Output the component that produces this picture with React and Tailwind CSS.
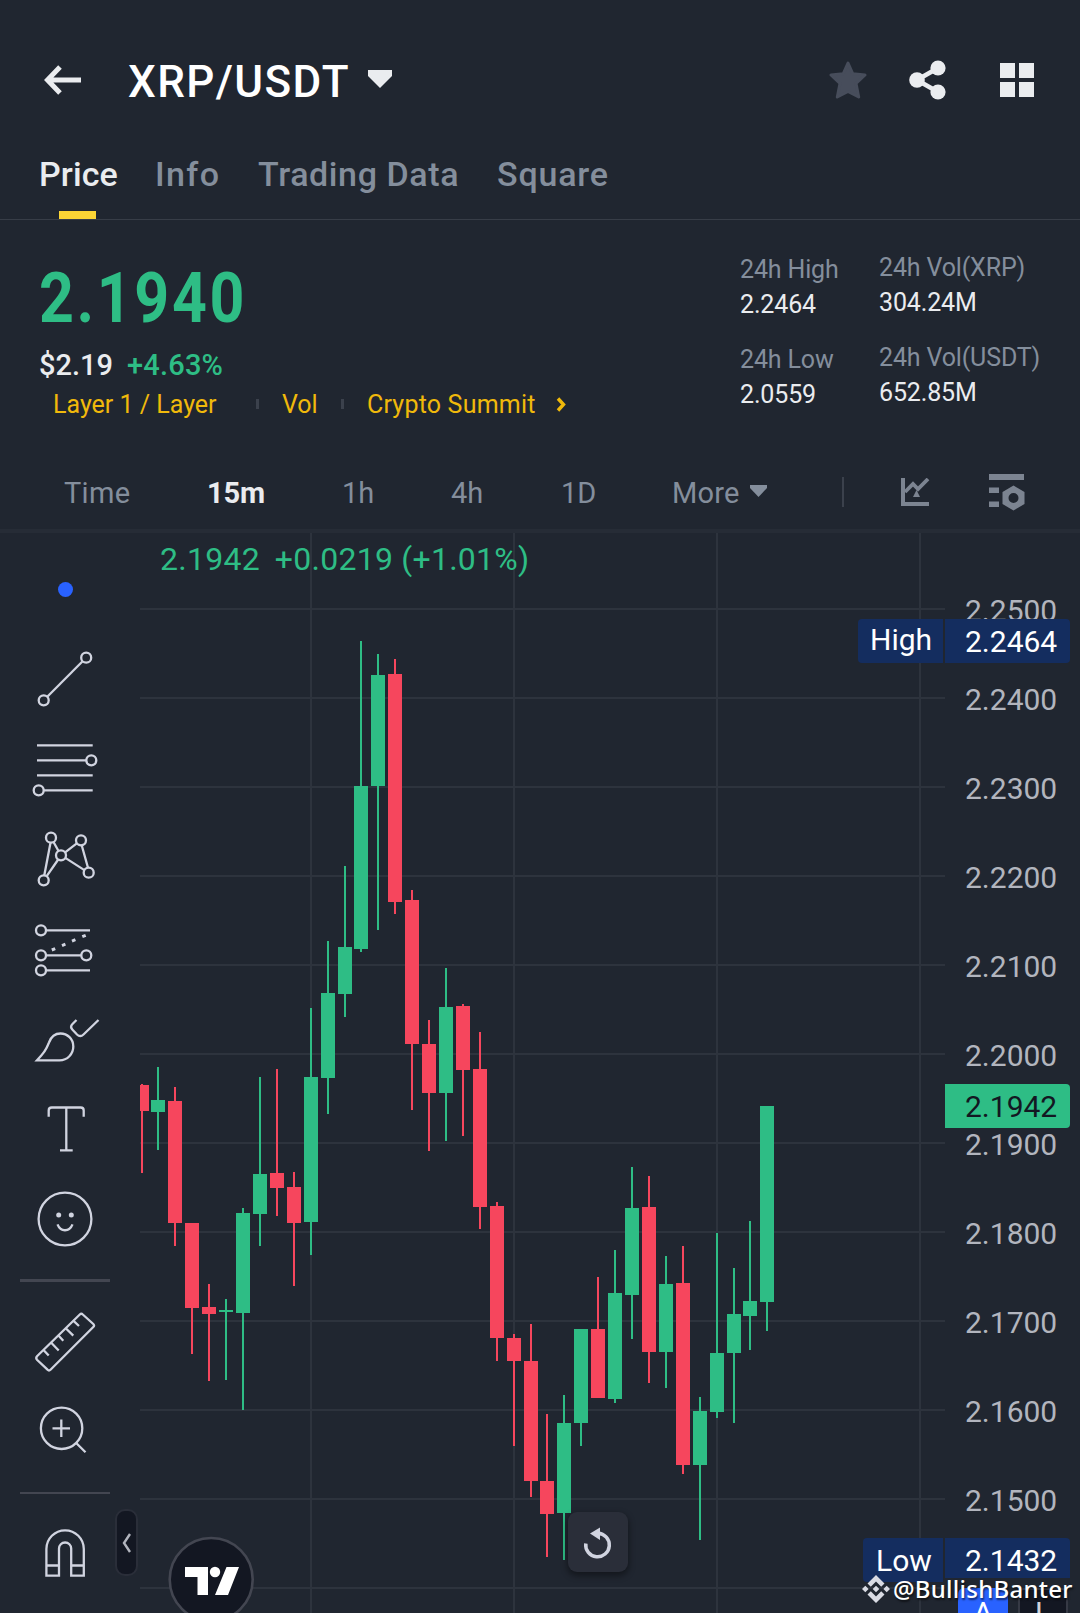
import React from "react";

const TABS = [
  { label: 'Price', style: 'w-[79px] tracking-[0.1px] text-[#eaecef]' },
  { label: 'Info', style: 'w-[66px] tracking-[1.4px]' },
  { label: 'Trading Data', style: 'w-[202px] tracking-[0.6px]' },
  { label: 'Square', style: 'w-[113px] tracking-[0.8px]' },
];

const PRICE_LABELS = [
  '2.2500', '2.2400', '2.2300', '2.2200', '2.2100', '2.2000',
  '2.1900', '2.1800', '2.1700', '2.1600', '2.1500',
];

const GRID_ROWS = [608, 697, 786, 875, 964, 1053, 1142, 1231, 1320, 1409, 1498, 1587];
const GRID_COLUMNS = [310, 513, 716, 919];

// [center x, high, body top, body bottom, low, is up]
const CANDLES = [
  [142, 1084, 1085, 1111, 1173, 0],
  [158, 1067, 1100, 1112, 1150, 1],
  [175, 1087, 1101, 1223, 1246, 0],
  [192, 1223, 1223, 1308, 1354, 0],
  [209, 1284, 1307, 1314, 1381, 0],
  [226, 1299, 1310, 1312, 1380, 1],
  [243, 1208, 1213, 1313, 1410, 1],
  [260, 1077, 1174, 1214, 1246, 1],
  [277, 1069, 1173, 1188, 1216, 0],
  [294, 1172, 1187, 1223, 1286, 0],
  [311, 1008, 1077, 1222, 1255, 1],
  [328, 941, 993, 1078, 1114, 1],
  [345, 866, 947, 994, 1017, 1],
  [361, 641, 786, 949, 952, 1],
  [378, 654, 675, 786, 930, 1],
  [395, 659, 674, 902, 914, 0],
  [412, 890, 900, 1044, 1110, 0],
  [429, 1020, 1044, 1093, 1151, 0],
  [446, 968, 1007, 1093, 1141, 1],
  [463, 1004, 1006, 1070, 1136, 0],
  [480, 1032, 1069, 1207, 1229, 0],
  [497, 1202, 1206, 1338, 1361, 0],
  [514, 1334, 1338, 1361, 1446, 0],
  [531, 1324, 1361, 1481, 1497, 0],
  [547, 1414, 1481, 1514, 1557, 0],
  [564, 1395, 1423, 1513, 1560, 1],
  [581, 1329, 1329, 1423, 1446, 1],
  [598, 1277, 1329, 1398, 1398, 0],
  [615, 1250, 1293, 1399, 1403, 1],
  [632, 1167, 1208, 1295, 1339, 1],
  [649, 1176, 1207, 1352, 1383, 0],
  [666, 1256, 1284, 1352, 1388, 1],
  [683, 1246, 1283, 1465, 1474, 0],
  [700, 1397, 1411, 1465, 1540, 1],
  [717, 1233, 1353, 1412, 1418, 1],
  [734, 1268, 1314, 1353, 1423, 1],
  [750, 1221, 1301, 1316, 1350, 1],
  [767, 1106, 1106, 1302, 1331, 1],
];

const ToolIcon = ({ children }) => (
  <svg
    className="h-[90px] w-[140px] shrink-0"
    viewBox="0 0 140 90"
    fill="none"
    stroke="#d1d4e0"
    strokeWidth="2.3"
  >
    {children}
  </svg>
);

const Header = () => (
  <header className="flex h-[159px] items-center pl-[44px] pr-[46px]">
    <svg className="h-[30px] w-[37px]" viewBox="0 0 37 30" fill="none" stroke="#eaecef" strokeWidth="5">
      <path d="M4 15H37M16 2L3.5 15L16 28" />
    </svg>
    <h1 className="ml-[47px] w-[228px] whitespace-nowrap pt-[4px] text-[44px] font-medium leading-none tracking-[1.4px] text-white">XRP/USDT</h1>
    <svg className="-mt-[2px] ml-[12px] h-[18px] w-[24px]" viewBox="0 0 24 18" fill="#eaecef">
      <path d="M0 0H24V6L12 18L0 6Z" />
    </svg>
    <div className="ml-auto flex items-center">
      <svg className="h-[40px] w-[38px]" viewBox="0 0 38 40" fill="#474d5b" stroke="#474d5b" strokeWidth="3" strokeLinejoin="round">
        <path d="M19 3L23.8 13.8L36 15L27 23.4L29.7 37L19 31.5L8.3 37L11 23.4L2 15L14.2 13.8Z" />
      </svg>
      <svg className="ml-[42px] h-[40px] w-[37px]" viewBox="0 0 37 40" fill="#eaecef">
        <path d="M8 20L29 8M8 20L29 32" stroke="#eaecef" strokeWidth="4.6" />
        <circle cx="8" cy="20" r="7.8" />
        <circle cx="29" cy="8" r="7.6" />
        <circle cx="29" cy="32" r="7.6" />
      </svg>
      <svg className="ml-[54px] h-[34px] w-[34px]" viewBox="0 0 34 34" fill="#eaecef">
        <path d="M0 0H15V15H0ZM19 0H34V15H19ZM0 19H15V34H0ZM19 19H34V34H19Z" />
      </svg>
    </div>
  </header>
);

const Tabs = () => (
  <nav className="flex h-[61px] gap-[37px] border-b border-[#373d47] pl-[39px] text-[34px] font-medium leading-[30px] text-[#848e9c]">
    {
      TABS.map((tab, index) => (
        <div key={tab.label} className={`flex flex-col justify-between whitespace-nowrap ${tab.style}`}>
          <span>{tab.label}</span>
          {index === 0 && <span className="ml-[20px] h-[8px] w-[37px] bg-[#fcd535]" />}
        </div>
      ))
    }
  </nav>
);

const Stat = ({ label, value }) => (
  <div className="flex h-[90px] flex-col whitespace-nowrap text-[25px] leading-[35px] tracking-[-0.15px]">
    <span className="text-[#848e9c]">{label}</span>
    <span className="text-[#eaecef]">{value}</span>
  </div>
);

const Summary = () => (
  <section className="flex h-[229px] justify-between">
    <div className="pl-[39px] pt-[41px]">
      <div className="h-[75px] origin-left scale-x-[0.87] text-[70px] font-bold leading-[74px] tracking-[3px] text-[#2ebd85]">2.1940</div>
      <div className="mt-[12px] flex h-[34px] items-center gap-[14px] text-[29px] font-medium leading-none">
        <span className="text-[#eaecef]">$2.19</span>
        <span className="tracking-[0.2px] text-[#2ebd85]">+4.63%</span>
      </div>
      <div className="mt-[5px] flex h-[34px] items-center whitespace-nowrap pl-[14px] text-[25px] leading-none text-[#f0b90b]">
        <span className="w-[203px]">Layer 1 / Layer</span>
        <span className="h-[10px] w-[3px] bg-[#3b414c]" />
        <span className="ml-[23px] w-[59px]">Vol</span>
        <span className="h-[10px] w-[3px] bg-[#3b414c]" />
        <span className="ml-[23px] w-[188px] tracking-[0.2px]">Crypto Summit</span>
        <svg className="h-[15px] w-[12px]" viewBox="0 0 12 15" fill="none" stroke="#f0b90b" strokeWidth="3.4">
          <path d="M3 1.5L8.5 7.5L3 13.5" />
        </svg>
      </div>
    </div>
    <div className="flex">
      <div className="w-[139px] pt-[32px]">
        <Stat label="24h High" value="2.2464" />
        <Stat label="24h Low" value="2.0559" />
      </div>
      <div className="w-[201px] pt-[30px]">
        <Stat label="24h Vol(XRP)" value="304.24M" />
        <Stat label="24h Vol(USDT)" value="652.85M" />
      </div>
    </div>
  </section>
);

const Intervals = () => (
  <section className="flex h-[84px] items-center border-b-4 border-[#262c36] pl-[64px] pt-[6px] text-[29px] leading-none text-[#848e9c]">
    <span className="w-[143px] pt-[3px] tracking-[0.3px]">Time</span>
    <span className="w-[135px] pt-[3px] font-bold tracking-[-0.2px] text-[#eaecef]">15m</span>
    <span className="w-[109px] pt-[3px]">1h</span>
    <span className="w-[110px] pt-[3px]">4h</span>
    <span className="w-[111px] pt-[3px]">1D</span>
    <span className="w-[78px] pt-[3px] tracking-[0.2px]">More</span>
    <svg className="-mt-[2px] h-[12px] w-[17px]" viewBox="0 0 17 12" fill="#848e9c">
      <path d="M0 0H17V3L8.5 12L0 3Z" />
    </svg>
    <span className="ml-[75px] h-[30px] w-[2px] bg-[#3b414c]" />
    <svg className="ml-[57px] h-[28px] w-[29px]" viewBox="0 0 29 28" fill="none" stroke="#7c8491" strokeWidth="4">
      <path d="M2 0V26H28" />
      <path d="M4 14L12 6L17 11L27 1" strokeWidth="3.8" />
      <path d="M15.5 12L12 19H19Z" fill="#7c8491" stroke="none" />
    </svg>
    <svg className="ml-[59px] h-[38px] w-[36px]" viewBox="0 0 36 38" fill="#7c8491">
      <path d="M0 1H35V7H0ZM0 14.5H10V20H0ZM0 28.5H10V34H0Z" />
      <path fillRule="evenodd" d="M24.500 12.500L35.500 19V31L24.500 37.500L13.500 31V19ZM24.500 20A5 5 0 1 0 24.500 30A5 5 0 1 0 24.500 20Z" />
    </svg>
  </section>
);

const Toolbar = () => (
  <aside className="flex w-[140px] flex-col">
    <span className="ml-[58px] mt-[49px] h-[15px] w-[15px] shrink-0 rounded-full bg-[#2962ff]" />
    <div className="mt-[37px] flex flex-col">
      <ToolIcon>
        <circle cx="86.2" cy="23.7" r="5" />
        <circle cx="43.7" cy="66.3" r="5" />
        <path d="M47.3 62.7L82.6 27.3" />
      </ToolIcon>
      <ToolIcon>
        <path d="M37 21.3H92.7M37 36.3H86M37 51.3H92.7M44 66.3H92.7" />
        <circle cx="91.3" cy="36.3" r="5" />
        <circle cx="38.7" cy="66.3" r="5" />
      </ToolIcon>
      <ToolIcon>
        <path d="M50.5 28.7L44.3 61.3M53.5 28L58.500 37M58.200 45.500L46.700 62.200M65.100 38.300L76.800 29.300M65.300 43.900L84.400 56.100M81.700 31.300L88 53.700" />
        <circle cx="51" cy="23.7" r="5" />
        <circle cx="81" cy="26.3" r="5" />
        <circle cx="61" cy="41.3" r="5" />
        <circle cx="88.7" cy="58.7" r="5" />
        <circle cx="43.7" cy="66.3" r="5" />
      </ToolIcon>
      <ToolIcon>
        <path d="M46 26.3H90M46 51.3H81.3M46 66.3H90" />
        <circle cx="41" cy="26.3" r="5" />
        <circle cx="41" cy="51.3" r="5" />
        <circle cx="86.3" cy="51.3" r="5" />
        <circle cx="41" cy="66.3" r="5" />
        <path d="M51.8 46L55.2 44.600M62 41.600L65.400 40.200M72 37.100L75.400 35.700M82.300 32.700L85.700 31.300" strokeWidth="3" />
      </ToolIcon>
      <ToolIcon>
        <path d="M37 66.3C44 59 46 56 49 48.5C51 43 55 39.5 60.5 39.5C67.5 39.5 73.3 45 73.3 52.5C73.3 60 67.5 66.3 59.5 66.3Z" />
        <path d="M76.5 26L72.5 30C70.8 31.7 70.8 34 72.5 35.8L77 40.5C79 42.4 81.5 42.4 83.5 40.5L98.5 26" />
      </ToolIcon>
      <ToolIcon>
        <path d="M48.7 32.7V26.5Q48.7 23.5 51.7 23.5H80.7Q83.7 23.5 83.7 26.5V32.7M66.3 23.5V66.3M60 66.3H72.7" />
      </ToolIcon>
      <ToolIcon>
        <circle cx="65" cy="45" r="26.4" />
        <circle cx="58.7" cy="41" r="2.5" fill="#d1d4e0" stroke="none" />
        <circle cx="71.3" cy="41" r="2.5" fill="#d1d4e0" stroke="none" />
        <path d="M57.5 50.4C60.500 58.200 69.500 58.200 72.500 50.400" />
      </ToolIcon>
    </div>
    <span className="ml-5 mt-[15px] h-[3px] w-[90px] shrink-0 bg-[#434651]" />
    <div className="mt-[15px] flex flex-col">
      <ToolIcon>
        <path d="M37 59.3L79.8 17.5Q81.3 16 82.8 17.5L93.3 27Q94.8 28.5 93.3 30L50.5 72.7Q49 74.2 47.5 72.7L37 62.8Q35.5 61 37 59.3Z" />
        <path d="M43.5 53L48.7 58.5M51 45.5L58.7 53.5M58.2 38.3L63.3 43.8M65.5 31L73.3 38.6M73 23.3L79 29" />
      </ToolIcon>
      <ToolIcon>
        <circle cx="61.6" cy="41.300" r="20.700" />
        <path d="M52.500 41.300H70M61.300 32.500V50M76.200 56L85.500 65.300" />
      </ToolIcon>
    </div>
    <span className="ml-5 mt-[15px] h-[2px] w-[90px] shrink-0 bg-[#434651]" />
    <div className="mt-[6px] flex">
      <ToolIcon>
        <path d="M46.4 75.6V49A18.7 18.7 0 0 1 83.8 49V75.6H71.2V48.6A6.1 6.1 0 0 0 59 48.6V75.6ZM46.4 65.5H59M71.2 65.5H83.8" />
      </ToolIcon>
    </div>
  </aside>
);

const Chart = () => (
  <svg className="-mt-1 h-[1084px] w-[805px] shrink-0" viewBox="140 529 805 1084" shapeRendering="crispEdges">
    {GRID_COLUMNS.map((x) => <rect key={x} x={x} y="529" width="2" height="1084" fill="#2d333d" />)}
    {GRID_ROWS.map((y) => <rect key={y} x="140" y={y} width="805" height="2" fill="#2d333d" />)}
    {
      CANDLES.map(([x, high, top, bottom, low, up]) => (
        <g key={x} fill={up ? '#2ebd85' : '#f6465d'}>
          <rect x={x - 1} y={high} width="2" height={low - high} />
          <rect x={x - 7} y={top} width="14" height={bottom - top} />
        </g>
      ))
    }
  </svg>
);

const PriceScale = () => (
  <div className="flex w-[135px] flex-col pl-[20px] pt-[33px] text-[30px] leading-none text-[#b2b5be]">
    {PRICE_LABELS.map((label) => <span key={label} className="flex h-[89px] shrink-0 items-center">{label}</span>)}
  </div>
);

/**
 * Everything that floats over the candles: price tags, buttons and logos.
 */
const Overlays = () => (
  <>
    <div className="absolute left-[160px] top-[8px] flex gap-[15px] whitespace-nowrap text-[32px] leading-[36px] tracking-[0.25px] text-[#2ebd85]">
      <span>2.1942</span>
      <span>+0.0219 (+1.01%)</span>
    </div>

    <div className="absolute left-[858px] top-[86px] flex h-[44px] gap-[2px] text-[30px] text-white">
      <span className="w-[85px] rounded-l-[4px] bg-[#142d5f] pl-[12px] leading-[42px]">High</span>
      <span className="w-[125px] rounded-r-[4px] bg-[#142d5f] pl-[20px] leading-[45px]">2.2464</span>
    </div>

    <div className="absolute left-[945px] top-[551px] h-[44px] w-[125px] rounded-r-[4px] bg-[#2ebd85] pl-[20px] text-[30px] leading-[46px] text-[#131722]">2.1942</div>

    <div className="absolute left-[863px] top-[1005px] flex h-[44px] gap-[2px] text-[30px] leading-[45px] text-white">
      <span className="w-[80px] rounded-l-[4px] bg-[#142d5f] pl-[13px]">Low</span>
      <span className="h-[40px] w-[125px] rounded-tr-[4px] bg-[#142d5f] pl-[20px]">2.1432</span>
    </div>

    <div className="absolute left-[958px] top-[1055px] flex gap-[10px] text-center text-[30px] leading-[50px]">
      <span className="h-[50px] w-[50px] rounded-[6px] bg-[#2962ff] text-white">A</span>
      <span className="h-[50px] w-[50px] rounded-[6px] border-2 border-[#363a45] bg-[#131722] leading-[46px] text-[#d1d4dc]">L</span>
    </div>

    <div className="absolute left-[115px] top-[976px] flex h-[67px] w-[23px] items-center justify-center rounded-[10px] border-2 border-[#2a2e39] bg-[#131722]">
      <svg className="h-[20px] w-[10px]" viewBox="0 0 10 20" fill="none" stroke="#b2b5be" strokeWidth="2.4">
        <path d="M8 1L2 10L8 19" />
      </svg>
    </div>

    <svg className="absolute left-[168px] top-[1003px] h-[87px] w-[87px]" viewBox="0 0 87 87">
      <circle cx="43.2" cy="43.5" r="41.5" fill="#131722" stroke="#434651" strokeWidth="2.6" />
      <path d="M17 31H40V59H29.5V41H17ZM58.5 31H71L60 59H47Z" fill="#fff" />
      <circle cx="47" cy="36" r="5.2" fill="#fff" />
    </svg>

    <div className="absolute left-[568px] top-[979px] flex h-[60px] w-[60px] items-center justify-center rounded-[9px] bg-[#2a2e39] shadow-[0_3px_6px_1px_rgba(0,0,0,0.4)]">
      <svg className="h-[36px] w-[36px]" viewBox="0 0 36 36" fill="none" stroke="#d1d4e0" strokeWidth="3.5">
        <path d="M5.8 19.5A11.8 11.8 0 1 0 18 9.2" />
        <path d="M10 9.5L20 3.5V16Z" fill="#d1d4e0" stroke="none" />
      </svg>
    </div>

    <div className="absolute left-[862px] top-[1040px] flex items-center gap-[3px] whitespace-nowrap font-['Noto_Sans',sans-serif] text-[24px] font-medium leading-[32px] tracking-[0.25px] text-white [text-shadow:1px_2px_2px_rgba(0,0,0,0.6)]">
      <svg className="h-[28px] w-[28px]" viewBox="0 0 28 28" fill="#d9dbe3">
        <path d="M14 0L22.5 8.5L19.2 11.8L14 6.6L8.8 11.8L5.5 8.5ZM14 28L22.5 19.5L19.2 16.2L14 21.4L8.8 16.2L5.5 19.5ZM0 14L3.3 10.7L6.6 14L3.3 17.3ZM21.4 14L24.7 10.7L28 14L24.7 17.3ZM14 10.7L17.3 14L14 17.3L10.7 14Z" />
      </svg>
      <span>@BullishBanter</span>
    </div>
  </>
);

const App = () => {
  return (
    <div className="h-[1613px] w-[1080px] overflow-hidden bg-[#202630] font-[Roboto,sans-serif]">
      <Header />
      <Tabs />
      <Summary />
      <Intervals />
      <main className="relative flex h-[1080px] overflow-hidden">
        <Toolbar />
        <Chart />
        <PriceScale />
        <Overlays />
      </main>
    </div>
  )
};

export default App;
